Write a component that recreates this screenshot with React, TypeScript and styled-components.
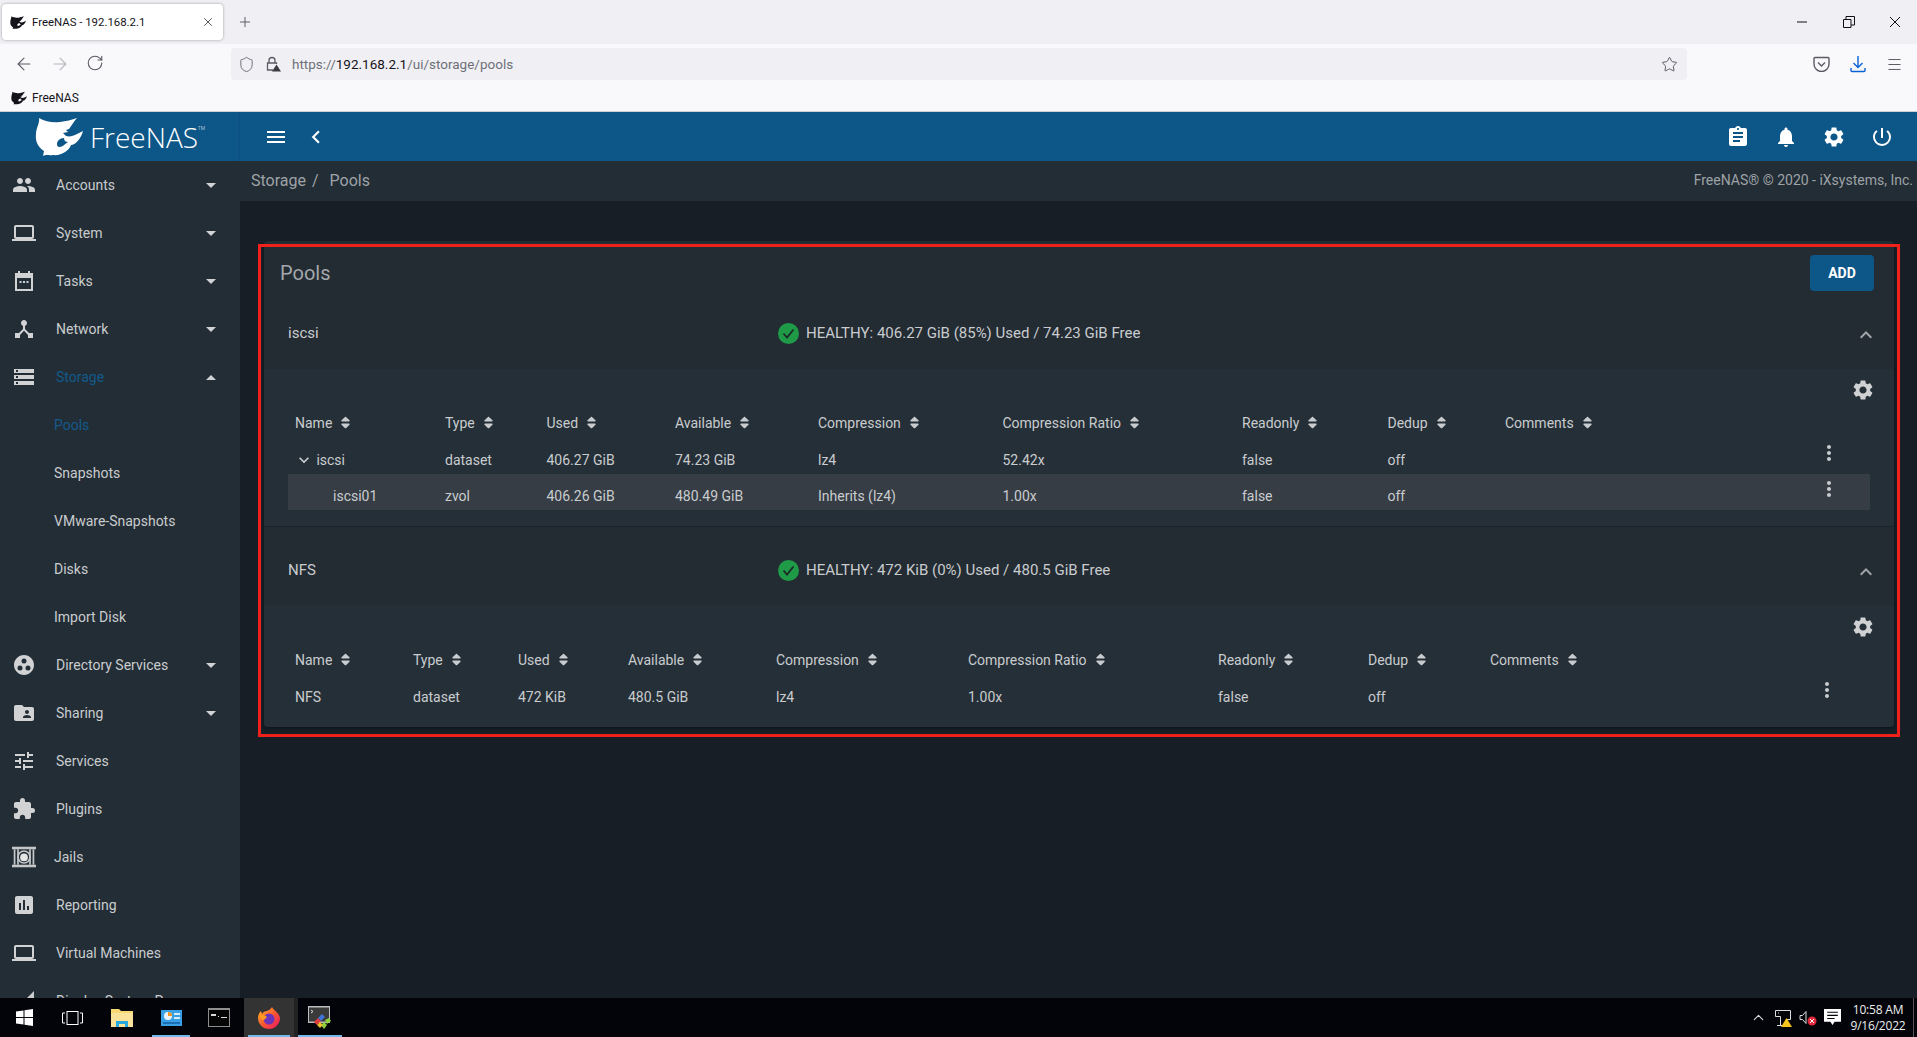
import React from "react";
import styled, { createGlobalStyle } from "styled-components";
import {
  MdPeople, MdLaptop, MdDeviceHub, MdStorage, MdGroupWork, MdFolderShared, MdTune, MdExtension,
  MdAssessment, MdSignalCellular4Bar, MdMenu, MdChevronLeft, MdAssignment, MdNotifications, MdSettings,
  MdPowerSettingsNew, MdExpandLess, MdExpandMore, MdMoreVert,
} from "react-icons/md";
import { FaSort } from "react-icons/fa";
import { ArrowLeft, ArrowRight, RotateCw, Shield, Star, Plus, X, Menu, ChevronUp } from "lucide-react";

const GlobalStyle = createGlobalStyle`
  html, body { margin: 0; padding: 0; height: 100%; overflow: hidden; }
  #root { height: 100%; }
  * { box-sizing: border-box; }
  body { font-family: Roboto, "Liberation Sans", sans-serif; font-size: 14px; }
`;

const Page = styled.div`
  height: 1037px; width: 1917px; display: flex; flex-direction: column; overflow: hidden; background: #171e26;
`;

/* browser chrome */
const TabStrip = styled.div`
  height: 44px; flex: none; background: #f0f0f4; display: flex; align-items: center; padding-left: 2px; color: #15141a;
`;
const Tab = styled.div`
  width: 221px; height: 36px; background: #fff; border-radius: 4px; box-shadow: 0 0 3px rgba(0,0,0,.35);
  display: flex; align-items: center; padding: 0 8px 0 8px; font-size: 11.4px;
`;
const TabTitle = styled.span` margin-left: 6px; flex: 1; `;
const NewTab = styled.div` margin-left: 14px; display: flex; color: #4a4a52; `;
const WindowControls = styled.div`
  margin-left: auto; display: flex; align-items: center; gap: 34.5px; padding-right: 16px; color: #111;
`;
const NavBar = styled.div`
  height: 40px; flex: none; background: #f9f9fb; display: flex; align-items: center; color: #5b5b66;
`;
const NavButtons = styled.div` width: 231px; padding-left: 14px; display: flex; gap: 16px; flex: none; `;
const AddressBar = styled.div`
  width: 1456px; height: 32px; background: #f0f0f4; border-radius: 4px; display: flex; align-items: center;
  padding: 0 9px 0 7px; font-size: 13.5px; color: #6f6f78; flex: none;
`;
const AddressGap = styled.span` width: 10px; flex: none; `;
const UrlText = styled.span` margin-left: 11px; flex: 1; b { font-weight: 400; color: #15141a; } `;
const NavEnd = styled.div` flex: 1; display: flex; justify-content: flex-end; align-items: center; gap: 20px; padding-right: 14px; `;
const Bookmarks = styled.div`
  height: 28px; flex: none; background: #f9f9fb; border-bottom: 1px solid #cfcfd4; display: flex; align-items: center;
  padding: 0 0 0 11px; font-size: 12px; color: #15141a; gap: 5px;
`;

/* app header */
const AppHeader = styled.header`
  height: 49px; flex: none; background: #0d5688; display: flex; align-items: center; color: #fff;
`;
const LogoCell = styled.div`
  width: 240px; height: 100%; flex: none; display: flex; align-items: center; padding-left: 35px;
  border-right: 1px solid #0c5080;
`;
const LogoText = styled.span`
  font-family: "Open Sans", sans-serif; font-weight: 300; font-size: 28px; line-height: 1; margin-left: 7px;
  position: relative;
  sup { font-size: 5px; position: absolute; right: -7px; top: 3px; }
`;
const HeaderNav = styled.div` display: flex; align-items: center; padding-left: 24px; gap: 15px; `;
const HeaderActions = styled.div` margin-left: auto; display: flex; align-items: center; gap: 24px; padding-right: 23px; `;

/* app body */
const Body = styled.div` flex: 1; min-height: 0; display: flex; `;
const Sidebar = styled.nav` width: 240px; flex: none; background: #232d36; overflow: hidden; `;
const NavItem = styled.div<{ $active?: boolean; $sub?: boolean }>`
  height: 48px; display: flex; align-items: center; padding-left: ${p => (p.$sub ? "54px" : "12px")};
  color: ${p => (p.$active ? "#125a8c" : "#c9ccce")}; font-size: 14px;
`;
const NavIcon = styled.span`
  width: 24px; height: 24px; flex: none; display: flex; align-items: center; justify-content: center; color: #d0d2d4;
`;
const NavLabel = styled.span<{ $tight?: boolean }>` margin-left: ${p => (p.$tight ? "18px" : "20px")}; flex: 1; `;
const Caret = styled.span<{ $up?: boolean }>`
  width: 0; height: 0; margin-right: 24px; border-left: 5px solid transparent; border-right: 5px solid transparent;
  ${p => (p.$up ? "border-bottom: 5px solid #d0d2d4;" : "border-top: 5px solid #d0d2d4;")}
`;
const ClippedIcon = styled(NavIcon)` color: #c9ccce; `;

const Main = styled.main` flex: 1; min-width: 0; display: flex; flex-direction: column; `;
const TopBar = styled.div`
  height: 40px; flex: none; background: #232d36; display: flex; align-items: center; padding: 0 4px 2px 11px; color: #9ea3a7;
`;
const Crumbs = styled.div` font-size: 16px; display: flex; `;
const CrumbSlash = styled.span` margin: 0 11px 0 6px; `;
const Copyright = styled.div` margin-left: auto; font-size: 14px; `;
const Content = styled.div` padding: 40px 23px 0 24px; `;
const Card = styled.section`
  position: relative; background: #232b33; border-radius: 4px; box-shadow: 0 1px 3px rgba(0,0,0,.4); color: #c9ccce;
`;
const RedFrame = styled.div`
  position: absolute; top: 3px; left: -6px; right: -6px; bottom: -10px; border: 3px solid #f0201a; pointer-events: none;
`;
const TitleBar = styled.div` height: 64px; display: flex; align-items: center; padding: 0 20px 0 16px; `;
const Title = styled.h1` margin: 0; font-size: 20px; font-weight: 400; color: #a3a7ab; `;
const AddButton = styled.button`
  margin-left: auto; width: 64px; height: 36px; border: 0; border-radius: 4px; background: #0d5688; color: #fff;
  font-family: Roboto, sans-serif; font-weight: 700; font-size: 14px;
`;
const Panel = styled.div<{ $last?: boolean }>`
  margin-bottom: ${p => (p.$last ? "0" : "15px")};
`;
const PanelHeader = styled.div`
  height: 64px; display: grid; grid-template-columns: 490px 1fr auto; align-items: center; padding: 0 16px 8px 24px; font-size: 15px;
`;
const Status = styled.div` display: flex; align-items: center; gap: 7px; font-size: 15px; `;
const Collapse = styled.span` display: flex; color: #a3a7ab; padding-top: 4px; `;
const PanelBody = styled.div<{ $last?: boolean }>`
  background: #252f38; padding: 9px 24px 16px; ${p => !p.$last && "border-bottom: 1px solid #1b2229;"}
  ${p => p.$last && "border-radius: 0 0 4px 4px;"}
`;
const GearRow = styled.div` height: 24px; display: flex; justify-content: flex-end; margin-right: -5px; color: #cfd1d3; `;
const Row = styled.div<{ $cols: string; $hover?: boolean }>`
  height: 36px; display: grid; grid-template-columns: ${p => p.$cols}; background: ${p => (p.$hover ? "#363d45" : "transparent")};
`;
const Cell = styled.div<{ $head?: boolean; $indent?: number }>`
  padding: ${p => (p.$head ? "13px" : "14px")} 0 0 ${p => p.$indent ?? 0}px; line-height: 16px; white-space: nowrap;
  display: flex; gap: 7px; align-items: flex-start;
`;
const Sort = styled.span` color: #c9ccce; display: flex; margin-left: -1px; `;
const Dots = styled.div<{ $right: number }>`
  display: flex; justify-content: flex-end; padding: 3px ${p => p.$right}px 0 0; color: #c9ccce;
`;
const Expander = styled.span` display: flex; margin: -2px -5px 0 -3px; `;

/* taskbar */
const Taskbar = styled.footer` height: 39px; flex: none; background: #03040a; display: flex; align-items: stretch; color: #fff; `;
const Slot = styled.div<{ $w: number; $running?: boolean; $active?: boolean }>`
  width: ${p => p.$w}px; flex: none; display: flex; align-items: center; justify-content: center; position: relative;
  background: ${p => (p.$active ? "#333" : "transparent")};
  ${p => p.$active && "box-shadow: 4px 0 0 #222;"}
  ${p => p.$running && `&::after { content: ""; position: absolute; bottom: 0; left: 4px; right: 4px; height: 2px; background: #76b9ed; }`}
`;
const Tray = styled.div` margin-left: auto; display: flex; align-items: center; gap: 7px; padding-right: 0; `;
const Clock = styled.div`
  font-family: "Open Sans", sans-serif; font-size: 12px; line-height: 16px; text-align: center; width: 60px; color: #eee;
  letter-spacing: -.2px; margin-right: -2px;
`;
const ShowDesktop = styled.span` width: 4px; height: 100%; flex: none; border-left: 1px solid #555; `;

const Shark = ({ w, h }: { w: number; h: number }) => (
  <svg width={w} height={h} viewBox="0 0 48 39" fill="currentColor" fillRule="evenodd">
    <path d="M4 1C11 5 18 6 25 5C31 4 37 3 42 1C39 4 37 8 34 12L31 13L33 15L28 16L31 19C35 20 38 19 42 17L48 14C46 22 40 28 36 28C34 34 26 39 18 38C14 39 11 37 8 39L9 34C3 30 0 24 1 17C1 11 5 6 4 1ZM29 21C25 21 22 24 22 27C22 29 23 30 24 30C27 30 29 28 33 25C31 25 29 24 29 21Z" />
  </svg>
);
const Check = () => (
  <svg width="21" height="21" viewBox="0 0 21 21">
    <circle cx="10.5" cy="10.5" r="10.5" fill="#1f9a46" />
    <path d="M5.5 10.5L9 14.5L15.5 6.5" fill="none" stroke="#1c2a2a" strokeWidth="1.8" />
  </svg>
);
const CalendarIcon = () => (
  <svg width="24" height="24" viewBox="0 0 24 24" fill="currentColor">
    <path fillRule="evenodd" d="M3 4h3V2h2v2h8V2h2v2h3v18H3V4Zm2 5v11h14V9H5Z" />
    <rect x="7.5" y="12" width="2" height="2" /><rect x="11" y="12" width="2" height="2" /><rect x="14.5" y="12" width="2" height="2" />
  </svg>
);
const JailIcon = () => (
  <svg width="28" height="24" viewBox="0 0 28 24" fill="#c4c6c8">
    <rect x="0" y="0" width="28" height="3" /><rect x="0" y="21" width="28" height="3" />
    <rect x="2" y="3" width="2" height="18" /><rect x="6" y="3" width="2" height="18" />
    <rect x="20" y="3" width="2" height="18" /><rect x="24" y="3" width="2" height="18" />
    <circle cx="14" cy="12" r="7" fill="none" stroke="#c4c6c8" strokeWidth="2" />
    <circle cx="14" cy="12.5" r="4.5" fill="#e4e4e4" />
  </svg>
);
const LockWarn = () => (
  <svg width="16" height="16" viewBox="0 0 16 16" fill="none" stroke="#5b5b66" strokeWidth="1.3">
    <path d="M4 7V4.5a3 3 0 0 1 6 0V7" /><path d="M8 14H2.5V7h9v1" />
    <path d="M11.5 8.5L16 15.5H7Z" fill="#3a3a40" stroke="none" />
  </svg>
);
const Pocket = () => (
  <svg width="17" height="16" viewBox="0 0 17 16" fill="none" stroke="#5b5b66" strokeWidth="1.4">
    <path d="M2 1.5h13a1 1 0 0 1 1 1V8a7.5 7.5 0 0 1-15 0V2.5a1 1 0 0 1 1-1Z" /><path d="M5 6.5L8.5 10L12 6.5" />
  </svg>
);
const Download = () => (
  <svg width="16" height="18" viewBox="0 0 16 18" fill="none" stroke="#0b62d6" strokeWidth="1.4">
    <path d="M8 1v11M3.5 8L8 12.5L12.5 8" /><path d="M1 13v2.5a1 1 0 0 0 1 1h12a1 1 0 0 0 1-1V13" />
  </svg>
);
const Minimize = () => <svg width="12" height="12"><path d="M1 6h10" stroke="#111" strokeWidth="1" /></svg>;
const Restore = () => (
  <svg width="12" height="12" fill="none" stroke="#111"><path d="M.5 3.5h7.5v8h-7.5zM3 3V.5h8.5V9H8" /></svg>
);
const CloseWin = () => <svg width="12" height="12" stroke="#111"><path d="M1 1l10 10M11 1L1 11" /></svg>;

const Win = () => (
  <svg width="17" height="17" viewBox="0 0 17 17" fill="#fff">
    <path d="M0 2.5L7.5 1.4V8H0ZM8.5 1.3L17 0V8H8.5ZM0 9H7.5V15.6L0 14.5ZM8.5 9H17V17L8.5 15.7Z" />
  </svg>
);
const TaskView = () => (
  <svg width="21" height="14" viewBox="0 0 21 14" fill="none" stroke="#fff" strokeWidth="1">
    <rect x="5" y=".5" width="11" height="13" /><path d="M3 2H.5v10H3M18 2h2.5v10H18" />
  </svg>
);
const Folder = () => (
  <svg width="22" height="19" viewBox="0 0 22 19">
    <path d="M0 1h8l2 2h12v16H0Z" fill="#f8d775" /><path d="M0 5h22v14H0Z" fill="#fbe29b" />
    <path d="M5 19v-6h12v6h-3v-3H8v3Z" fill="#29a8e0" />
  </svg>
);
const ControlPanel = () => (
  <svg width="21" height="16" viewBox="0 0 21 16">
    <rect width="21" height="16" fill="#3aa0e4" /><circle cx="7" cy="6" r="4" fill="#e9f3fb" />
    <path d="M7 6V2a4 4 0 0 1 4 4Z" fill="#f29422" /><rect x="13" y="3" width="6" height="2" fill="#d6ebfa" />
    <rect x="13" y="7" width="6" height="2" fill="#d6ebfa" /><rect x="2" y="12" width="17" height="2" fill="#1b6fb5" />
  </svg>
);
const Cmd = () => (
  <svg width="22" height="19" viewBox="0 0 22 19">
    <rect width="22" height="19" fill="#8f8f8f" /><rect x="1" y="2" width="20" height="16" fill="#050505" />
    <path d="M3 6h5v2H3zM10 8h1v1h-1zM13 9h6v1h-6z" fill="#d8d8d8" />
  </svg>
);
const Firefox = () => (
  <svg width="24" height="24" viewBox="0 0 24 24">
    <defs><linearGradient id="ff" x1="0" y1="0" x2="1" y2="1"><stop offset="0" stopColor="#ffbd2e" /><stop offset=".5" stopColor="#ff5a2e" /><stop offset="1" stopColor="#e3126b" /></linearGradient></defs>
    <path d="M15 1c1 3 7 5 8 11a11 11 0 1 1-22 0c0-3 1-5 3-7l1 3c1-2 3-3 5-3 2-1 4-2 5-4Z" fill="url(#ff)" />
    <circle cx="12" cy="13" r="5.5" fill="#6a35b8" /><path d="M2 9c3-1 6 0 8 2l-3 3C5 14 3 12 2 9Z" fill="#ff9a1e" />
  </svg>
);
const Term = () => (
  <svg width="24" height="23" viewBox="0 0 24 23">
    <rect width="22" height="17" fill="#bdbdbd" /><rect x="1" y="1.5" width="20" height="14" fill="#3a3a3a" />
    <path d="M3 4l2 1.5L3 7" stroke="#ddd" fill="none" />
    <path d="M6 16l4-4 3 3-4 4Z" fill="#e23b3b" /><path d="M10 12l4-4 3 3-4 4Z" fill="#3d74d6" />
    <path d="M13 19l3-3 3 3-3 4Z" fill="#8ed13a" /><path d="M17 14l4-2 2 3-4 3Z" fill="#8ed13a" /><path d="M9 19l3-3 3 3-3 3Z" fill="#e8c02e" />
  </svg>
);
const Chevron = () => <ChevronUp size={17} strokeWidth={1.5} color="#ddd" />;
const NetworkWarn = () => (
  <svg width="18" height="18" viewBox="0 0 18 18" fill="none" stroke="#ddd">
    <path d="M1.5 1.5h15v9h-4M1.5 1.5v6h5v9M4 4h1M3 16.5h7" />
    <path d="M12.5 9L18 18H7Z" fill="#f8c51c" stroke="none" />
  </svg>
);
const SoundOff = () => (
  <svg width="18" height="16" viewBox="0 0 18 16" fill="none" stroke="#ddd">
    <path d="M1 5.5h2.5L7 1.5v12L3.5 9.5H1Z" />
    <circle cx="13" cy="11" r="4.5" fill="#e02a3c" stroke="none" /><path d="M11 9l4 4M15 9l-4 4" stroke="#fff" />
  </svg>
);
const Notice = () => (
  <svg width="17" height="17" viewBox="0 0 16 16" fill="#fff">
    <path d="M0 0h16v12h-6l-2 3-2-3H0Z" /><path d="M3 3h10M3 6h10M3 9h7" stroke="#03040a" />
  </svg>
);

type Item = { label: string; icon: React.ReactNode; caret?: "up" | "down"; active?: boolean; sub?: boolean; tight?: boolean };
const ic = (C: React.ComponentType<{ size?: number }>) => <C size={24} />;
const items: Item[] = [
  { label: "Accounts", icon: ic(MdPeople), caret: "down" },
  { label: "System", icon: ic(MdLaptop), caret: "down" },
  { label: "Tasks", icon: <CalendarIcon />, caret: "down" },
  { label: "Network", icon: ic(MdDeviceHub), caret: "down" },
  { label: "Storage", icon: ic(MdStorage), caret: "up", active: true },
  { label: "Pools", icon: null, sub: true, active: true },
  { label: "Snapshots", icon: null, sub: true },
  { label: "VMware-Snapshots", icon: null, sub: true },
  { label: "Disks", icon: null, sub: true },
  { label: "Import Disk", icon: null, sub: true },
  { label: "Directory Services", icon: ic(MdGroupWork), caret: "down" },
  { label: "Sharing", icon: ic(MdFolderShared), caret: "down" },
  { label: "Services", icon: ic(MdTune) },
  { label: "Plugins", icon: ic(MdExtension) },
  { label: "Jails", icon: <JailIcon />, tight: true },
  { label: "Reporting", icon: ic(MdAssessment) },
  { label: "Virtual Machines", icon: ic(MdLaptop) },
  { label: "Display System Processes", icon: ic(MdSignalCellular4Bar) },
];

const heads = ["Name", "Type", "Used", "Available", "Compression", "Compression Ratio", "Readonly", "Dedup", "Comments"];

type Pool = {
  name: string; status: string; cols: string; dotsRight: number; rows: { cells: string[]; indent?: number; hover?: boolean; open?: boolean }[];
};
const pools: Pool[] = [
  {
    name: "iscsi",
    status: "HEALTHY: 406.27 GiB (85%) Used / 74.23 GiB Free",
    cols: "157px 101.5px 128.5px 143px 184.5px 239.5px 145.5px 117.5px 1fr 60px",
    dotsRight: 29,
    rows: [
      { cells: ["iscsi", "dataset", "406.27 GiB", "74.23 GiB", "lz4", "52.42x", "false", "off", ""], open: true },
      { cells: ["iscsi01", "zvol", "406.26 GiB", "480.49 GiB", "Inherits (lz4)", "1.00x", "false", "off", ""], indent: 45, hover: true },
    ],
  },
  {
    name: "NFS",
    status: "HEALTHY: 472 KiB (0%) Used / 480.5 GiB Free",
    cols: "125px 105px 110px 148px 192px 250px 150px 122px 1fr 60px",
    dotsRight: 31,
    rows: [{ cells: ["NFS", "dataset", "472 KiB", "480.5 GiB", "lz4", "1.00x", "false", "off", ""] }],
  },
];

export default function App() {
  return (
    <Page>
      <GlobalStyle />
      <TabStrip>
        <Tab>
          <Shark w={16} h={13} />
          <TabTitle>FreeNAS - 192.168.2.1</TabTitle>
          <X size={14} strokeWidth={1.4} color="#333" />
        </Tab>
        <NewTab><Plus size={16} strokeWidth={1.3} /></NewTab>
        <WindowControls>
          <Minimize /><Restore /><CloseWin />
        </WindowControls>
      </TabStrip>
      <NavBar>
        <NavButtons>
          <ArrowLeft size={20} strokeWidth={1.3} />
          <ArrowRight size={20} strokeWidth={1.3} color="#b4b4ba" />
          <RotateCw size={18} strokeWidth={1.5} />
        </NavButtons>
        <AddressBar>
          <Shield size={17} strokeWidth={1.4} />
          <AddressGap />
          <LockWarn />
          <UrlText>https://<b>192.168.2.1</b>/ui/storage/pools</UrlText>
          <Star size={17} strokeWidth={1.4} color="#5b5b66" />
        </AddressBar>
        <NavEnd>
          <Pocket /><Download /><Menu size={17} strokeWidth={1.4} />
        </NavEnd>
      </NavBar>
      <Bookmarks>
        <Shark w={16} h={14} />
        <span>FreeNAS</span>
      </Bookmarks>
      <AppHeader>
        <LogoCell>
          <Shark w={48} h={39} />
          <LogoText>FreeNAS<sup>TM</sup></LogoText>
        </LogoCell>
        <HeaderNav>
          <MdMenu size={24} />
          <MdChevronLeft size={26} />
        </HeaderNav>
        <HeaderActions>
          <MdAssignment size={24} /><MdNotifications size={24} /><MdSettings size={24} /><MdPowerSettingsNew size={24} />
        </HeaderActions>
      </AppHeader>
      <Body>
        <Sidebar>
          {items.map(it => (
            <NavItem key={it.label} $active={it.active} $sub={it.sub}>
              {it.icon && (it.label.startsWith("Display") ? <ClippedIcon>{it.icon}</ClippedIcon> : <NavIcon>{it.icon}</NavIcon>)}
              {it.sub ? it.label : <NavLabel $tight={it.tight}>{it.label}</NavLabel>}
              {it.caret && <Caret $up={it.caret === "up"} />}
            </NavItem>
          ))}
        </Sidebar>
        <Main>
          <TopBar>
            <Crumbs><span>Storage</span><CrumbSlash>/</CrumbSlash><span>Pools</span></Crumbs>
            <Copyright>FreeNAS® © 2020 - iXsystems, Inc.</Copyright>
          </TopBar>
          <Content>
            <Card>
              <TitleBar>
                <Title>Pools</Title>
                <AddButton>ADD</AddButton>
              </TitleBar>
              {pools.map((pool, i) => {
                const last = i === pools.length - 1;
                return (
                  <Panel key={pool.name} $last={last}>
                    <PanelHeader>
                      <span>{pool.name}</span>
                      <Status><Check />{pool.status}</Status>
                      <Collapse><MdExpandLess size={24} /></Collapse>
                    </PanelHeader>
                    <PanelBody $last={last}>
                      <GearRow><MdSettings size={24} /></GearRow>
                      <Row $cols={pool.cols}>
                        {heads.map((h, n) => (
                          <Cell $head key={h} $indent={n === 0 ? 7 : 0}>{h}<Sort><FaSort size={15} /></Sort></Cell>
                        ))}
                        <span />
                      </Row>
                      {pool.rows.map(r => (
                        <Row key={r.cells[0]} $cols={pool.cols} $hover={r.hover}>
                          {r.cells.map((c, n) => (
                            <Cell key={n} $indent={n === 0 ? (r.indent ?? (r.open ? 9.4 : 7)) : 0}>
                              {n === 0 && r.open && <Expander><MdExpandMore size={20} /></Expander>}
                              {c}
                            </Cell>
                          ))}
                          <Dots $right={pool.dotsRight}><MdMoreVert size={24} /></Dots>
                        </Row>
                      ))}
                    </PanelBody>
                  </Panel>
                );
              })}
              <RedFrame />
            </Card>
          </Content>
        </Main>
      </Body>
      <Taskbar>
        <Slot $w={48}><Win /></Slot>
        <Slot $w={48}><TaskView /></Slot>
        <Slot $w={52}><Folder /></Slot>
        <Slot $w={46} $running><ControlPanel /></Slot>
        <Slot $w={50}><Cmd /></Slot>
        <Slot $w={50} $active $running><Firefox /></Slot>
        <Slot $w={52} $running><Term /></Slot>
        <Tray>
          <Chevron /><NetworkWarn /><SoundOff /><Notice />
          <Clock>10:58 AM<br />9/16/2022</Clock>
          <ShowDesktop />
        </Tray>
      </Taskbar>
    </Page>
  );
}
